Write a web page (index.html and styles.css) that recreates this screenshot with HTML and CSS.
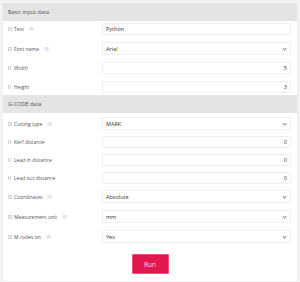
FILE: index.html
```html
<!DOCTYPE html>
<html lang="en">
<head>
    <meta charset="UTF-8">
    <meta name="viewport" content="width=device-width, initial-scale=1.0">
    <title>Text to G-CODE</title>
    <link rel="stylesheet" href="styles.css">
</head>
<body>
    <div class="panel">
        <div class="section-title">Basic input data</div>
        <div class="rows first">
            <div class="row">
                <div class="label"><span class="ico box"></span>Text<span class="hint">?</span></div>
                <div class="field">Python</div>
            </div>
            <div class="row sel">
                <div class="label"><span class="ico box"></span>Font name<span class="hint">?</span></div>
                <div class="field select">Arial<span class="chev"></span></div>
            </div>
            <div class="row">
                <div class="label"><span class="ico bars"></span>Width</div>
                <div class="field num">5</div>
            </div>
            <div class="row">
                <div class="label"><span class="ico bars"></span>Height</div>
                <div class="field num">3</div>
            </div>
        </div>

        <div class="section-title">G-CODE data</div>
        <div class="rows second">
            <div class="row sel">
                <div class="label"><span class="ico box"></span>Cutting type<span class="hint">?</span></div>
                <div class="field select">MARK<span class="chev"></span></div>
            </div>
            <div class="row">
                <div class="label"><span class="ico bars"></span>Kerf distance</div>
                <div class="field num">0</div>
            </div>
            <div class="row">
                <div class="label"><span class="ico bars"></span>Lead in distance</div>
                <div class="field num">0</div>
            </div>
            <div class="row">
                <div class="label"><span class="ico bars"></span>Lead out distance</div>
                <div class="field num">0</div>
            </div>
            <div class="row sel">
                <div class="label"><span class="ico box"></span>Coordinates<span class="hint">?</span></div>
                <div class="field select">Absolute<span class="chev"></span></div>
            </div>
            <div class="row sel">
                <div class="label"><span class="ico box"></span>Measurement unit<span class="hint">?</span></div>
                <div class="field select">mm<span class="chev"></span></div>
            </div>
            <div class="row sel">
                <div class="label"><span class="ico box"></span>M codes on<span class="hint">?</span></div>
                <div class="field select">Yes<span class="chev"></span></div>
            </div>
        </div>

        <div class="actions">
            <button class="run">Run</button>
        </div>
    </div>
</body>
</html>
```

FILE: styles.css
```css
body {
    margin: 0;
    background-color: #f3f3f3;
    font-family: "Open Sans", Arial, sans-serif;
    color: #444;
}
.panel {
    margin: 3px 3px 0 3px;
    background-color: #fff;
    box-shadow: 0 1px 1px rgba(0, 0, 0, 0.12);
    padding-bottom: 7px;
}
.section-title {
    height: 18px;
    line-height: 18px;
    padding-left: 5px;
    background-color: #e4e4e4;
    font-size: 5.5px;
    color: #555;
}
.section-title:first-child {
    margin-top: 1px;
}
.rows {
    display: flex;
    flex-direction: column;
    gap: 7px;
    padding: 2px 6px 2px 5px;
}
.rows.second {
    gap: 6px;
    padding-top: 4px;
    padding-bottom: 0;
}
.rows.second .sel + .sel {
    margin-top: 1px;
}
.row {
    display: flex;
    align-items: center;
}
.label {
    width: 94px;
    display: flex;
    align-items: center;
    font-size: 5px;
    color: #555;
}
.ico {
    width: 4px;
    height: 4px;
    margin-right: 2px;
    box-sizing: border-box;
}
.ico.box {
    border: 1px solid #d6d6d6;
    background-color: #eee;
}
.ico.bars {
    border-left: 1px solid #d0d0d0;
    border-right: 1px solid #d0d0d0;
    width: 3px;
    margin-right: 3px;
}
.hint {
    margin-left: 5px;
    width: 5px;
    height: 4px;
    line-height: 4px;
    border-radius: 1px;
    background-color: #ececec;
    color: #bbb;
    font-size: 3px;
    text-align: center;
}
.field {
    flex: 1;
    height: 12px;
    box-sizing: border-box;
    display: flex;
    align-items: center;
    padding: 0 3px;
    border: 1px solid #efefef;
    border-radius: 1px;
    background-color: #fff;
    font-size: 5.5px;
    color: #333;
}
.field.select {
    justify-content: space-between;
    height: 13px;
}
.field.num {
    justify-content: flex-end;
}
.chev {
    width: 2px;
    height: 2px;
    border-right: 1px solid #888;
    border-bottom: 1px solid #888;
    transform: rotate(45deg);
    margin: -1px 1px 0 0;
}
.actions {
    display: flex;
    justify-content: center;
    padding-top: 11px;
}
.run {
    width: 37px;
    height: 20px;
    border: 1px solid #f0507a;
    border-radius: 1px;
    background-color: #e2194e;
    color: #fbd9e3;
    font-family: "Open Sans", Arial, sans-serif;
    font-size: 6.5px;
    cursor: pointer;
}
```
